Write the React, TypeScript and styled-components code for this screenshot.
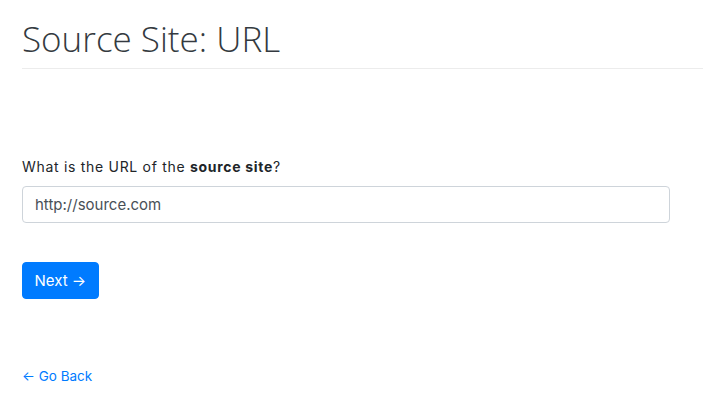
import React from 'react';
import styled, { createGlobalStyle } from 'styled-components';

const GlobalStyle = createGlobalStyle`
  html, body {
    margin: 0;
    padding: 0;
    background: #fff;
  }
  body {
    font-family: Inter, "Liberation Sans", sans-serif;
    color: #212529;
  }
`;

const Page = styled.div`
  padding: 0 0 0 22px;
`;

const Header = styled.div`
  padding-top: 17px;
  padding-bottom: 8px;
  border-bottom: 1px solid #ececec;
`;

const Title = styled.h1`
  margin: 0;
  font-family: "Open Sans", sans-serif;
  font-weight: 300;
  font-size: 35px;
  line-height: 43px;
  color: #343a40;
`;

const Form = styled.div`
  padding-top: 89px;
  width: 648px;
`;

const Label = styled.label`
  display: block;
  font-size: 14px;
  line-height: 18px;
  letter-spacing: 0.7px;
  color: #212529;
  margin-bottom: 10px;

  strong {
    font-weight: 700;
  }
`;

const Input = styled.input`
  display: block;
  box-sizing: border-box;
  width: 100%;
  height: 37px;
  padding: 6px 12px;
  font-family: Inter, "Liberation Sans", sans-serif;
  font-size: 15px;
  color: #495057;
  background: #fff;
  border: 1px solid #ced4da;
  border-radius: 4px;
  outline: none;
`;

const Button = styled.button`
  display: block;
  margin-top: 39px;
  height: 37px;
  padding: 0 11.5px;
  font-family: Inter, "Liberation Sans", sans-serif;
  font-size: 15px;
  color: #fff;
  background: #007bff;
  border: 1px solid #007bff;
  border-radius: 4px;
  cursor: pointer;
`;

const BackLink = styled.a`
  display: inline-block;
  margin-top: 69px;
  font-size: 13.5px;
  color: #007bff;
  text-decoration: none;
`;

const App: React.FC = () => {
  return (
    <>
      <GlobalStyle />
      <Page>
        <Header>
          <Title>Source Site: URL</Title>
        </Header>
        <Form>
          <Label htmlFor="source-url">
            What is the URL of the <strong>source site</strong>?
          </Label>
          <Input id="source-url" type="text" defaultValue="http://source.com" />
          <Button>Next →</Button>
        </Form>
        <BackLink href="#">← Go Back</BackLink>
      </Page>
    </>
  );
};

export default App;
